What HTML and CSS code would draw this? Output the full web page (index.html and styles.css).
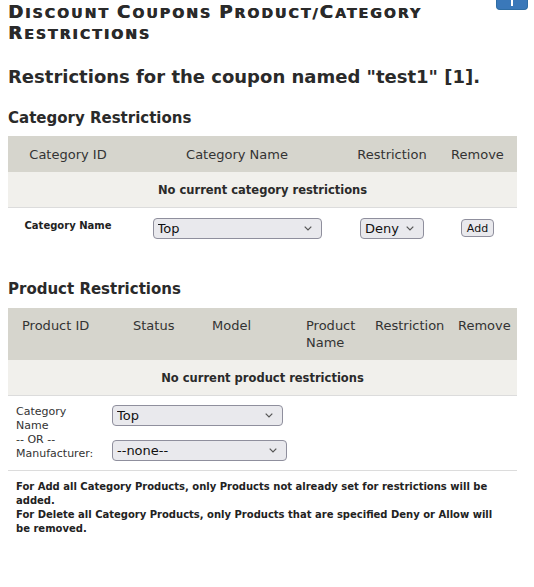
FILE: index.html
```html
<!DOCTYPE html>
<html lang="en">
<head>
<meta charset="utf-8">
<title>Discount Coupons Product/Category Restrictions</title>
<link rel="stylesheet" href="styles.css">
</head>
<body>
<a class="totop" href="#" aria-label="Back to top"><span class="totop-bar"></span></a>

<h1 class="page-title"><span class="sc-big">D</span>iscount <span class="sc-big">C</span>oupons <span class="sc-big">P</span>roduct/<span class="sc-big">C</span>ategory <span class="sc-big">R</span>estrictions</h1>
<h2 class="coupon-title">Restrictions for the coupon named "test1" [1].</h2>

<h3 class="section-title cat-title">Category Restrictions</h3>
<div class="cat-grid">
  <div class="th">Category ID</div>
  <div class="th">Category Name</div>
  <div class="th">Restriction</div>
  <div class="th">Remove</div>
  <div class="empty-row">No current category restrictions</div>
  <div class="form-cell"><span class="form-label">Category Name</span></div>
  <div class="form-cell">
    <span class="select-wrap w-top">
      <select class="select"><option>Top</option></select>
      <svg class="chev" viewBox="0 0 8 5" width="8" height="5"><path d="M0.7 0.7 L4 4 L7.3 0.7" fill="none" stroke="#555" stroke-width="1.2"/></svg>
    </span>
  </div>
  <div class="form-cell">
    <span class="select-wrap w-deny">
      <select class="select"><option>Deny</option><option>Allow</option></select>
      <svg class="chev" viewBox="0 0 8 5" width="8" height="5"><path d="M0.7 0.7 L4 4 L7.3 0.7" fill="none" stroke="#555" stroke-width="1.2"/></svg>
    </span>
  </div>
  <div class="form-cell"><button class="btn" type="button">Add</button></div>
</div>

<h3 class="section-title prod-title">Product Restrictions</h3>
<div class="prod-grid">
  <div class="th th-left">Product ID</div>
  <div class="th th-left">Status</div>
  <div class="th th-left">Model</div>
  <div class="th th-left">Product Name</div>
  <div class="th th-left">Restriction</div>
  <div class="th th-left">Remove</div>
  <div class="empty-row">No current product restrictions</div>
</div>

<div class="prod-form">
  <div class="prod-row">
    <span class="small-label">Category Name</span>
    <span class="select-wrap w-ptop">
      <select class="select"><option>Top</option></select>
      <svg class="chev" viewBox="0 0 8 5" width="8" height="5"><path d="M0.7 0.7 L4 4 L7.3 0.7" fill="none" stroke="#555" stroke-width="1.2"/></svg>
    </span>
  </div>
  <div class="prod-row row-end">
    <span class="small-label">-- OR --<br>Manufacturer:</span>
    <span class="select-wrap w-none">
      <select class="select"><option>--none--</option></select>
      <svg class="chev" viewBox="0 0 8 5" width="8" height="5"><path d="M0.7 0.7 L4 4 L7.3 0.7" fill="none" stroke="#555" stroke-width="1.2"/></svg>
    </span>
  </div>
</div>

<div class="notes">
  <p>For Add all Category Products, only Products not already set for restrictions will be added.</p>
  <p>For Delete all Category Products, only Products that are specified Deny or Allow will be removed.</p>
</div>
</body>
</html>
```

FILE: styles.css
```css
* { box-sizing: border-box; }

body {
  margin: 3px 8px 0;
  font-family: "DejaVu Sans", Verdana, sans-serif;
  color: #333;
  background: #fff;
}

.totop {
  position: absolute;
  top: 0;
  right: 6px;
  width: 32px;
  height: 10px;
  background: #3a78b9;
  border: 1px solid #2e6da4;
  border-top: none;
  border-radius: 0 0 4px 4px;
  display: flex;
  justify-content: center;
}
.totop-bar {
  width: 2px;
  height: 6px;
  background: #fff;
}

.page-title {
  margin: 0;
  font-size: 14px;
  line-height: 21px;
  font-weight: bold;
  text-transform: uppercase;
  letter-spacing: 2.1px;
  color: #2a2a2a;
  text-shadow: 0.7px 0 0 #2a2a2a;
}
.sc-big {
  font-size: 18px;
  line-height: 18px;
}

.coupon-title {
  margin: 21px 0 0;
  font-size: 18px;
  line-height: 21px;
  font-weight: bold;
  color: #2a2a2a;
}

.section-title {
  margin: 0;
  font-size: 15px;
  line-height: 18px;
  font-weight: bold;
  color: #2a2a2a;
}
.cat-title { margin-top: 22px; margin-bottom: 9px; }
.prod-title { margin-top: 32px; margin-bottom: 10px; }

.cat-grid {
  display: grid;
  width: 509px;
  grid-template-columns: 120px 218px 92px 79px;
}
.prod-grid {
  display: grid;
  width: 509px;
  grid-template-columns: 111px 79px 94px 69px 83px 73px;
}

.th {
  background: #d6d5cd;
  font-size: 13px;
  line-height: 17px;
  font-weight: normal;
  padding: 10px 0 9px;
  text-align: center;
  color: #333;
}
.th-left {
  text-align: left;
  padding: 9px 4px 9px 14px;
}

.empty-row {
  grid-column: 1 / -1;
  background: #f1f0ec;
  height: 36px;
  border-bottom: 1px solid #dcdcdc;
  display: flex;
  align-items: center;
  justify-content: center;
  font-size: 11.5px;
  font-weight: bold;
  color: #2a2a2a;
}

.form-cell {
  display: flex;
  justify-content: center;
  align-items: flex-start;
  padding: 10px 0 9px;
}
.form-label {
  font-size: 10px;
  line-height: 14px;
  font-weight: bold;
  color: #222;
  margin-top: 1px;
}

.select-wrap {
  position: relative;
  display: inline-block;
  height: 21px;
}
.select {
  appearance: none;
  -webkit-appearance: none;
  width: 100%;
  height: 21px;
  margin: 0;
  padding: 0 20px 0 4px;
  font-family: "DejaVu Sans", Verdana, sans-serif;
  font-size: 13px;
  color: #111;
  background: #e9e9ed;
  border: 1px solid #8f8f9d;
  border-radius: 4px;
}
.chev {
  position: absolute;
  right: 10px;
  top: 8px;
  pointer-events: none;
}
.w-top { width: 169px; }
.w-deny { width: 64px; }
.w-ptop { width: 171px; }
.w-none { width: 175px; }

.btn {
  height: 18px;
  width: 33px;
  padding: 0;
  margin-top: 1px;
  font-family: "DejaVu Sans", Verdana, sans-serif;
  font-size: 11px;
  color: #111;
  background: #e9e9ed;
  border: 1px solid #8f8f9d;
  border-radius: 4px;
}

.prod-form {
  width: 509px;
  padding: 9px 0 9px 8px;
  border-bottom: 1px solid #dcdcdc;
}
.prod-row {
  display: flex;
  align-items: flex-start;
}
.row-end { align-items: flex-end; }
.small-label {
  width: 96px;
  padding-right: 14px;
  font-size: 11px;
  line-height: 14px;
  color: #333;
}

.notes {
  width: 509px;
  padding: 9px 8px 0;
  font-size: 10px;
  line-height: 14px;
  font-weight: bold;
  color: #222;
}
.notes p { margin: 0; }
```
